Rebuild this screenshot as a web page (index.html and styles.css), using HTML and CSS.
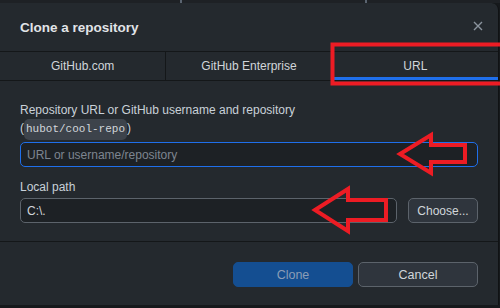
FILE: index.html
```html
<!DOCTYPE html>
<html lang="en">
<head>
    <meta charset="UTF-8">
    <title>Clone a repository</title>
    <link rel="stylesheet" href="styles.css">
</head>
<body>
    <div class="behind"></div>

    <div class="dialog">
        <div class="header">
            <h1>Clone a repository</h1>
            <svg class="close" width="10" height="10" viewBox="0 0 10 10">
                <path d="M1 1 L9 9 M9 1 L1 9" stroke="#8b949e" stroke-width="1.4" fill="none"/>
            </svg>
        </div>

        <div class="tabs">
            <div class="tab">GitHub.com</div>
            <div class="tab">GitHub Enterprise</div>
            <div class="tab active">URL</div>
        </div>

        <div class="content">
            <div class="label">Repository URL or GitHub username and repository</div>
            <div class="label code-line">(<code>hubot/cool-repo</code>)</div>
            <input class="field focus" type="text" placeholder="URL or username/repository">

            <div class="label path-label">Local path</div>
            <div class="row">
                <input class="field" type="text" value="C:\.">
                <button class="btn choose">Choose...</button>
            </div>
        </div>

        <div class="footer">
            <button class="btn primary">Clone</button>
            <button class="btn">Cancel</button>
        </div>
    </div>

    <!-- red annotations drawn over the screenshot -->
    <svg class="marks" width="500" height="308" viewBox="0 0 500 308">
        <rect x="332.5" y="44.5" width="175" height="39" fill="none" stroke="#ed1c24" stroke-width="4"/>
        <polygon points="400,154 431,135 431,145 465,145 465,162 431,162 431,173" fill="none" stroke="#ed1c24" stroke-width="4"/>
        <polygon points="315,210 348,189 348,200 386,200 386,220 348,220 348,231" fill="none" stroke="#ed1c24" stroke-width="4"/>
    </svg>
</body>
</html>
```

FILE: styles.css
```css
body { margin: 0; background: #16191c; font-family: "Liberation Sans", Arial, sans-serif; position: relative; width: 500px; height: 308px; overflow: hidden; }
.behind { height: 3px; background: #1e2125 repeating-linear-gradient(90deg, transparent 0 180px, #5a6470 180px 182px, transparent 182px 185px); }

.dialog { width: 498px; height: 302px; background: #24292e; border-right: 1px solid #101214; border-radius: 0 7px 0 0; display: flex; flex-direction: column; }

.header { height: 48px; flex-shrink: 0; display: flex; align-items: center; justify-content: space-between; padding: 0 15px 0 20px; box-sizing: border-box; }
.header h1 { margin: 0; font-size: 13.5px; font-weight: 700; color: #e1e4e8; }
.close { margin-top: -2px; }

.tabs { display: flex; flex-shrink: 0; border-top: 1px solid #141719; border-bottom: 1px solid #141719; height: 28px; }
.tab { flex: 1; display: flex; align-items: center; justify-content: center; font-size: 12px; color: #d1d5da; border-right: 1px solid #141719; }
.tab:last-child { border-right: none; }
.tab.active { box-shadow: inset 0 -3px 0 #1f6feb; }

.content { height: 161px; flex-shrink: 0; padding: 21px 20px 0 20px; box-sizing: border-box; border-bottom: 1px solid #141719; }
.label { font-size: 12px; line-height: 16px; color: #c9d1d9; }
.code-line { line-height: 21px; margin-bottom: 2px; }
.code-line code { display: inline-block; font-family: "Liberation Mono", monospace; font-size: 11px; line-height: 21px; background: #3d434b; color: #d1d5da; padding: 0 2px; border-radius: 5px; }
.path-label { margin-top: 12px; margin-bottom: 3px; }

.field { display: block; box-sizing: border-box; height: 25px; width: 100%; background: #1d2125; border: 1px solid #5c636b; border-radius: 5px; color: #d1d5da; font-family: inherit; font-size: 12px; padding: 0 6px; outline: none; }
.field::placeholder { color: #7d8590; }
.field.focus { border-color: #1f6feb; }

.row { display: flex; gap: 11px; }
.btn { box-sizing: border-box; height: 25px; background: #2f353d; border: 1px solid #5c636b; border-radius: 5px; color: #d1d5da; font-family: inherit; font-size: 12.5px; padding: 0; }
.choose { width: 70px; flex-shrink: 0; font-size: 12px; }

.footer { flex: 1; display: flex; justify-content: flex-end; gap: 5px; padding: 20px 20px 0 0; box-sizing: border-box; }
.footer .btn { width: 120px; }
.btn.primary { background: #144e91; border-color: #144e91; color: #8a9db6; }

.marks { position: absolute; left: 0; top: 0; pointer-events: none; }
```
